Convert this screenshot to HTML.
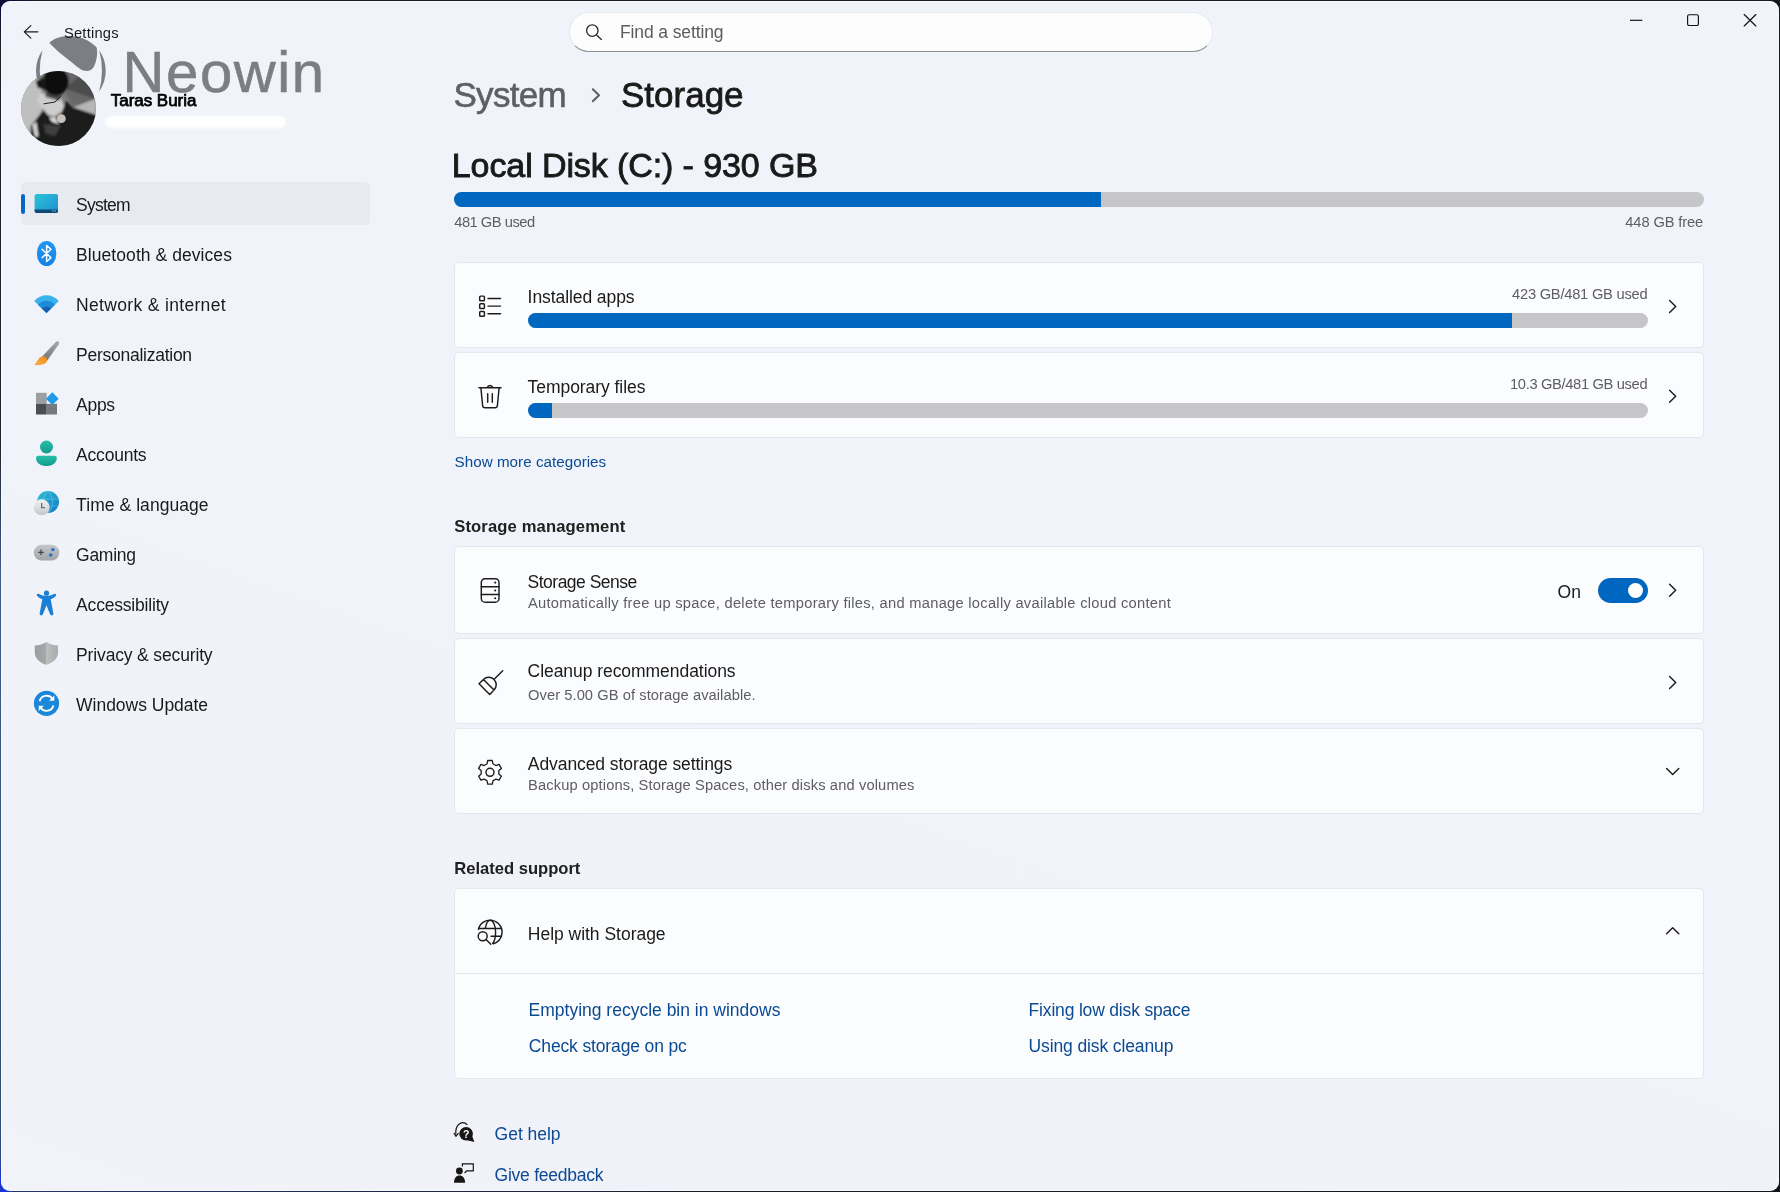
<!DOCTYPE html>
<html lang="en">
<head>
<meta charset="utf-8">
<title>Settings - Storage</title>
<style>
html,body{margin:0;padding:0;}
body{width:1780px;height:1192px;overflow:hidden;position:relative;
  background:radial-gradient(circle at 0 0,#0e0d3a 0,#0e0d3a 14px,rgba(14,13,58,0) 40px),
    radial-gradient(circle at 0 100%,#1a35d0 0,#1a35d0 12px,rgba(26,53,208,0) 36px),
    linear-gradient(180deg,#1c1e26 0%,#1f222c 37%,#3e5a85 48%,#3a5679 70%,#35526f 92%,#2a4690 100%);
  font-family:"Liberation Sans",sans-serif;}
#win{position:absolute;left:0;top:0;width:1780px;height:1192px;overflow:hidden;}
.edge-r{position:absolute;right:0;top:0;width:12px;height:1192px;background:#14161b;}
.edge-b{position:absolute;left:12px;right:0;bottom:0;height:6px;background:linear-gradient(90deg,#23356f 0%,#1b1d2b 40%,#13141a 100%);}
.surface{position:absolute;left:1px;top:1px;width:1778px;height:1190px;border-radius:9px;background:linear-gradient(200deg,#f0f3f9 0%,#f0f3f9 55%,#f2f2f9 100%);
  box-shadow:inset 0 0 0 1px rgba(255,255,255,.55);}
.t{position:absolute;white-space:pre;margin:0;padding:0;font-weight:400;text-decoration:none;display:block;-webkit-font-smoothing:antialiased;}
#txt{position:absolute;left:0;top:0;width:1780px;height:1192px;will-change:transform;}
.card{position:absolute;left:454px;width:1250px;box-sizing:border-box;background:#fbfcfe;border:1px solid #e6e7ec;border-radius:5px;}
.bar{position:absolute;border-radius:8px;background:#c6c6c9;overflow:hidden;}
.bar i{position:absolute;left:0;top:0;bottom:0;background:#0067c0;display:block;}
.navsel{position:absolute;left:21px;top:182px;width:349px;height:43px;border-radius:5px;background:#e8eaf1;}
.navsel b{position:absolute;left:0;top:12px;width:4px;height:20px;border-radius:2px;background:#0868c1;display:block;}
.search{position:absolute;left:568.5px;top:11.5px;width:644px;height:40px;box-sizing:border-box;border-radius:20px;
  background:#fdfdfe;border:1px solid #e8eaef;border-bottom-color:#8d8f93;}
.toggle{position:absolute;left:1598px;top:578px;width:50px;height:25px;border-radius:12.5px;background:#0067c0;}
.toggle i{position:absolute;left:29.5px;top:5px;width:15px;height:15px;border-radius:50%;background:#fff;display:block;}
.redact{position:absolute;left:105px;top:115.5px;width:180.5px;height:12px;border-radius:6px;background:#fff;filter:blur(1.2px);}
.divider{position:absolute;left:455px;top:973px;width:1248px;height:1px;background:#e6e7ec;}
svg.gfx{position:absolute;left:0;top:0;will-change:transform;}

</style>
</head>
<body>
<div id="win">
<div class="edge-r"></div><div class="edge-b"></div>
<div class="surface"></div>
<div class="search"></div>
<div class="navsel"><b></b></div>
<div class="redact"></div>
<div class="bar" style="left:454px;top:192px;width:1249.5px;height:15px"><i style="width:646.8px"></i></div>
<div class="card" style="top:262px;height:86px"></div>
<div class="bar" style="left:528px;top:313px;width:1119.5px;height:15px"><i style="width:984px"></i></div>
<div class="card" style="top:352px;height:86px"></div>
<div class="bar" style="left:528px;top:403px;width:1119.5px;height:15px"><i style="width:23.8px"></i></div>
<div class="card" style="top:546px;height:88px"></div>
<div class="toggle"><i></i></div>
<div class="card" style="top:638px;height:86px"></div>
<div class="card" style="top:728px;height:86px"></div>
<div class="card" style="top:888px;height:191px"></div>
<div class="divider"></div>

<svg class="gfx" width="1780" height="1192" viewBox="0 0 1780 1192">
<defs>
  <linearGradient id="gSys" x1="0" y1="0" x2="1" y2="1"><stop offset="0" stop-color="#2ac3d6"/><stop offset="1" stop-color="#1f8fd2"/></linearGradient>
  <linearGradient id="gBt" x1="0" y1="0" x2="0" y2="1"><stop offset="0" stop-color="#2196f6"/><stop offset="1" stop-color="#1482e6"/></linearGradient>
  <linearGradient id="gAcc" x1="0" y1="0" x2="0" y2="1"><stop offset="0" stop-color="#27bfa6"/><stop offset="1" stop-color="#159a8c"/></linearGradient>
  <linearGradient id="gGlobe" x1="0" y1="0" x2="1" y2="1"><stop offset="0" stop-color="#2cc0d6"/><stop offset="1" stop-color="#1478c8"/></linearGradient>
  <linearGradient id="gClock" x1="0" y1="0" x2="0" y2="1"><stop offset="0" stop-color="#f3f3f4"/><stop offset="1" stop-color="#c4c6ca"/></linearGradient>
  <linearGradient id="gPad" x1="0" y1="0" x2="0" y2="1"><stop offset="0" stop-color="#c3c5c8"/><stop offset="1" stop-color="#a3a5a9"/></linearGradient>
  <linearGradient id="gShield" x1="0" y1="0" x2="1" y2="0"><stop offset="0" stop-color="#9b9d9f"/><stop offset="0.5" stop-color="#a7a9ab"/><stop offset="0.5" stop-color="#bcbec0"/><stop offset="1" stop-color="#a9abad"/></linearGradient>
  <linearGradient id="gBrush" x1="1" y1="0" x2="0" y2="1"><stop offset="0" stop-color="#a9abad"/><stop offset="1" stop-color="#6f7174"/></linearGradient>
  <linearGradient id="gTip" x1="1" y1="0" x2="0" y2="1"><stop offset="0" stop-color="#f08a1c"/><stop offset="1" stop-color="#fbb04a"/></linearGradient>
  <clipPath id="avc"><circle cx="58.5" cy="108.5" r="37.5"/></clipPath>
  <filter id="bl1" x="-20%" y="-20%" width="140%" height="140%"><feGaussianBlur stdDeviation="16"/></filter>
  <filter id="bl2" x="-20%" y="-20%" width="140%" height="140%"><feGaussianBlur stdDeviation="7"/></filter>
</defs>

<!-- Neowin watermark -->
<g fill="#7b7e83">
  <path d="M49.3 42.9 C54 38.5 60 36.300 68 36 C79 35.600 89 39.500 96.500 47.300 C97.500 51 97.300 55 96.500 58.700 C95.800 62 95 64.500 93.800 66.800 C92.300 69.600 90.300 70.900 87.700 70.900 C85.800 70.900 84 70.800 82.300 70.200 C78.500 68 75.500 65.500 72.200 62.800 L58.700 52 Z"/>
  <path d="M99.2 50.3 A35.750 35.750 0 0 1 99.200 91.400 A79.600 79.600 0 0 0 99.200 50.300 Z"/>
  <path d="M42.5 50.3 A35.750 35.750 0 0 0 42.500 91.400 A79.600 79.600 0 0 1 42.500 50.300 Z"/>
  <text x="122.6" y="91.5" font-family="'Liberation Sans',sans-serif" font-size="58" textLength="201.4" lengthAdjust="spacing" stroke="#7b7e83" stroke-width="0.6">Neowin</text>
</g>

<!-- avatar -->
<g clip-path="url(#avc)">
 <g transform="translate(15 65) scale(0.07133)">
  <rect x="0" y="0" width="1262" height="1192" fill="#7c7c7c"/>
  <g filter="url(#bl1)">
    <path d="M60 150 L340 200 L420 560 L300 760 L200 1000 L60 1000 Z" fill="#bfbfbf"/>
    <path d="M700 100 L1200 100 L1200 520 L820 590 L720 420 Z" fill="#676767"/>
    <path d="M700 330 L1130 480 L1130 300 L900 150 Z" fill="#4e4e4e"/>
    <path d="M800 600 L1140 470 L1140 700 Z" fill="#b6b6b6"/>
    <path d="M330 420 L470 380 L640 440 L700 620 L560 720 L470 700 L380 600 L310 500 Z" fill="#cdcdcd"/>
    <path d="M420 370 L650 420 L620 500 L430 450 Z" fill="#4a4a4a"/>
    <ellipse cx="575" cy="232" rx="178" ry="195" fill="#0e0e0e"/>
    <path d="M290 225 L430 170 L430 350 L320 320 Z" fill="#161616"/>
    <path d="M220 850 L400 640 L520 770 L640 700 L720 500 L800 590 L1140 700 L1140 1200 L220 1200 Z" fill="#1b1b1b"/>
    <path d="M400 830 L640 860 L560 1000 L430 960 Z" fill="#3f3f3f"/>
    <path d="M480 740 L560 730 L620 830 L520 800 Z" fill="#d8d8d8"/>
    <path d="M240 830 L300 800 L330 1000 L280 1010 Z" fill="#d2d2d2"/>
  </g>
  <g filter="url(#bl2)">
    <path d="M400 545 L560 520 L650 425" fill="none" stroke="#151515" stroke-width="13"/>
    <circle cx="650" cy="752" r="62" fill="#c8c1ba"/>
  </g>
 </g>
</g>

<!-- back arrow -->
<path d="M30.800 25.6 L24.300 31.85 L30.800 38.1 M24.600 31.85 H37.9" fill="none" stroke="#1f1f1f" stroke-width="1.25" stroke-linecap="round" stroke-linejoin="round"/>

<!-- window controls -->
<g fill="none" stroke="#111" stroke-width="1.15">
  <path d="M1630 20.3 H1642.3"/>
  <rect x="1687.6" y="14.7" width="10.8" height="10.800" rx="1.6"/>
  <path d="M1744.200 14.5 L1755.900 26 M1755.900 14.5 L1744.200 26" stroke-linecap="round"/>
</g>

<!-- search icon -->
<g fill="none" stroke="#2a2a2a" stroke-width="1.35" stroke-linecap="round">
  <circle cx="592.3" cy="30.6" r="5.7"/>
  <path d="M596.500 34.9 L601.4 39.4"/>
</g>

<!-- breadcrumb chevron -->
<path d="M592.800 89.2 L599 95.2 L592.800 101.200" fill="none" stroke="#5d5f62" stroke-width="2" stroke-linecap="round" stroke-linejoin="round"/>

<!-- nav icons -->
<g>
  <!-- System -->
  <rect x="34.6" y="194" width="23.4" height="19" rx="2" fill="url(#gSys)"/>
  <path d="M34.600 209.6 H58 V211 a2 2 0 0 1 -2 2 H36.600 a2 2 0 0 1 -2 -2 Z" fill="#0f4874"/>
  <rect x="52.2" y="210.300" width="1.2" height="1.2" fill="#7fd0ea"/><rect x="54.600" y="210.300" width="1.2" height="1.2" fill="#7fd0ea"/>
  <!-- Bluetooth -->
  <rect x="37" y="241" width="19.2" height="25" rx="9.6" ry="11.5" fill="url(#gBt)"/>
  <path d="M42 249.300 L51 257.700 L46.600 261.500 V245.500 L51 249.300 L42 257.700" fill="none" stroke="#fff" stroke-width="1.5" stroke-linejoin="round" stroke-linecap="round"/>
  <!-- Network -->
  <path d="M34.200 301 C41 293.200 52 293.200 58.800 301 L46.500 313 Z" fill="#39b3ee"/>
  <path d="M38 304.700 C42.800 299.500 50.200 299.500 55 304.700 L46.500 313 Z" fill="#1e8bd8"/>
  <path d="M41.800 308.400 C44.400 305.700 48.600 305.700 51.200 308.400 L46.500 313 Z" fill="#1660b0"/>
  <!-- Personalization -->
  <path d="M56.2 341.600 C58 340.300 60 342 58.800 344.200 L47.300 360.500 L42 356.800 Z" fill="url(#gBrush)"/>
  <path d="M42.300 356.300 C45.500 356 47.800 358.500 46.800 361.500 C45.500 364.500 39 365.800 33.800 364.800 C37.500 363 37.800 357.500 42.300 356.300 Z" fill="url(#gTip)"/>
  <!-- Apps -->
  <rect x="36" y="392.800" width="10.700" height="11" fill="#9c9ea2"/>
  <rect x="36" y="403.800" width="10.700" height="10.700" fill="#4b4d51"/>
  <rect x="46.700" y="403.800" width="10.300" height="10.700" fill="#77797d"/>
  <rect x="36" y="392.800" width="21" height="21.700" rx="1.5" fill="none"/>
  <path d="M52.300 392.300 L58.700 398.700 L52.300 405.100 L45.900 398.700 Z" fill="#1f9be8"/>
  <!-- Accounts -->
  <circle cx="46.500" cy="447" r="6.500" fill="url(#gAcc)"/>
  <path d="M36 458 a2.200 2.200 0 0 1 2.200 -2.200 H54.600 a2.200 2.200 0 0 1 2.200 2.200 C56.800 463.500 51.500 466 46.400 466 C41.300 466 36 463.500 36 458 Z" fill="url(#gAcc)"/>
  <!-- Time & language -->
  <circle cx="48" cy="502" r="11" fill="url(#gGlobe)"/>
  <path d="M48 491 C42 496 42 508 48 513 M48 491 C54 496 54 508 48 513 M37.500 499 H58.500 M38 506 H58" fill="none" stroke="#6fd3e6" stroke-width="0.7" opacity=".7"/>
  <circle cx="41.700" cy="507.300" r="8" fill="url(#gClock)"/>
  <path d="M41.700 503 V507.800 H45" fill="none" stroke="#55575b" stroke-width="1.100"/>
  <!-- Gaming -->
  <rect x="33.800" y="544.800" width="25.500" height="15.700" rx="7.850" fill="url(#gPad)"/>
  <path d="M38.200 552.300 H43.800 M41 549.500 V555.100" stroke="#44464a" stroke-width="1.300" fill="none"/>
  <circle cx="52.900" cy="549.600" r="1.700" fill="#1c6fd6"/><circle cx="50.700" cy="555" r="1.700" fill="#1c6fd6"/>
  <!-- Accessibility -->
  <g fill="#1a7fd6">
    <circle cx="46.500" cy="593.200" r="2.600"/>
    <path d="M37 595.700 C36.300 594.300 37.600 593.200 38.900 593.900 C43.500 596.400 49.500 596.400 54.100 593.900 C55.400 593.200 56.700 594.300 56 595.700 C54.500 597.600 52 598.800 50.700 599.300 L53.300 613.200 C53.700 615.600 50.900 616.400 50 614.100 L46.500 605.200 L43 614.100 C42.100 616.400 39.300 615.600 39.700 613.200 L42.300 599.300 C41 598.800 38.500 597.600 37 595.700 Z"/>
  </g>
  <!-- Privacy -->
  <path d="M46.400 642 C49.500 644.300 53.800 645.400 58 645.400 V652.500 C58 658.500 53 662.800 46.400 664.800 C39.800 662.800 34.800 658.500 34.800 652.500 V645.400 C39 645.400 43.300 644.300 46.400 642 Z" fill="url(#gShield)"/>
  <!-- Windows Update -->
  <circle cx="46.500" cy="703.300" r="12.600" fill="#1b87d9"/>
  <g fill="none" stroke="#fff" stroke-width="1.900" stroke-linecap="butt">
    <path d="M39.600 701.200 A7.200 7.200 0 0 1 52.300 698.600"/>
    <path d="M53.400 705.400 A7.200 7.200 0 0 1 40.700 708"/>
  </g>
  <path d="M54.300 695.600 V700.800 H49.100 Z" fill="#fff"/>
  <path d="M38.700 711 V705.800 H43.900 Z" fill="#fff"/>
</g>

<!-- content icons -->
<g fill="none" stroke="#1c1c1c" stroke-width="1.45" stroke-linecap="round" stroke-linejoin="round">
  <!-- installed apps (list) -->
  <rect x="479.700" y="296.100" width="4.700" height="4.700" rx="0.8"/><path d="M488 298.500 H500.500"/>
  <rect x="479.700" y="303.800" width="4.700" height="4.700" rx="0.8"/><path d="M488 306.100 H500.500"/>
  <rect x="479.700" y="311.500" width="4.700" height="4.700" rx="0.8"/><path d="M488 313.800 H500.500"/>
  <!-- trash -->
  <path d="M479 387.800 H501 M487.300 387.500 A2.800 2.800 0 0 1 492.700 387.500 M480.900 388 L482.600 405.500 A2.500 2.500 0 0 0 485.100 407.800 H494.900 A2.500 2.500 0 0 0 497.400 405.500 L499.100 388 M487.700 393.800 V402.200 M492.300 393.800 V402.200"/>
  <!-- storage sense -->
  <rect x="481.300" y="578.700" width="17.700" height="23.500" rx="3.800"/>
  <path d="M481.300 586.700 H499 M481.300 594.400 H499"/>
  <!-- broom -->
  <g transform="translate(490 683.500) rotate(45)">
    <path d="M0 -18 V-5.500 M-7.500 1.800 A7.500 7.500 0 0 1 7.500 1.800 Z M-7.500 1.800 V8 H7.500 V1.800"/>
  </g>
  <!-- gear -->
  <circle cx="490" cy="772.300" r="4"/>
  <!-- globe w/ search -->
  <path d="M478.400 929.200 A12 12 0 1 1 493.500 943.700"/>
  <path d="M479.200 928.400 H501.200 M491 936.200 H501.400"/>
  <path d="M485.300 928.300 C486.200 923.500 488 920.300 490.100 920.300 C493.200 920.300 495.600 925.500 495.600 932.100 C495.600 937.300 494.500 941.500 492.700 943.300"/>
  <circle cx="482.700" cy="936.200" r="4.500"/>
  <path d="M486 939.500 L490.800 944.300"/>
  <!-- card chevrons -->
  <path d="M1669.600 300.400 L1675.700 306.400 L1669.600 312.400"/>
  <path d="M1669.600 390.200 L1675.700 396.200 L1669.600 402.200"/>
  <path d="M1669.600 584.300 L1675.700 590.300 L1669.600 596.300"/>
  <path d="M1669.600 676.500 L1675.700 682.500 L1669.600 688.500"/>
  <path d="M1666.600 768.400 L1672.700 774.400 L1678.800 768.400"/>
  <path d="M1666.600 933.800 L1672.700 927.800 L1678.800 933.800"/>
</g>
<!-- storage dots -->
<g fill="#1c1c1c"><circle cx="495.200" cy="582.600" r="1.050"/><circle cx="495.200" cy="590.500" r="1.050"/><circle cx="495.200" cy="598.300" r="1.050"/></g>
<!-- gear teeth -->
<path d="M487.07 763.79 L487.71 760.52 L492.29 760.52 L492.93 763.79 L495.90 765.51 L499.06 764.43 L501.35 768.39 L498.83 770.58 L498.83 774.02 L501.35 776.21 L499.06 780.17 L495.90 779.09 L492.93 780.81 L492.29 784.08 L487.71 784.08 L487.07 780.81 L484.10 779.09 L480.94 780.17 L478.65 776.21 L481.17 774.02 L481.17 770.58 L478.65 768.39 L480.94 764.43 L484.10 765.51 Z" fill="none" stroke="#1c1c1c" stroke-width="1.300" stroke-linejoin="round"/>

<!-- get help -->
<g>
  <circle cx="466.100" cy="1133.800" r="6.800" fill="#161616"/>
  <path d="M467.2 1140.300 L474.400 1142 L471.900 1135.500 Z" fill="#161616"/>
  <path d="M467.300 1124.900 C463 1120.300 455 1123 455.800 1134.500" fill="none" stroke="#161616" stroke-width="1.200"/>
  <path d="M453.800 1133 L456 1136.200 L458.600 1133.200" fill="none" stroke="#161616" stroke-width="1.200"/>
  <text x="466.100" y="1137.600" text-anchor="middle" font-family="'Liberation Sans',sans-serif" font-weight="700" font-size="10.500" fill="#fff">?</text>
</g>
<!-- feedback -->
<g fill="#161616">
  <circle cx="459.400" cy="1171" r="3.400"/>
  <path d="M454 1182.800 C454 1178 456.200 1175.400 459.500 1175.400 C462.800 1175.400 465.100 1178 465.100 1182.800 Z"/>
  <path d="M462.400 1166.500 V1163.900 H473.300 V1170.900 H466.600 L464.600 1173" fill="none" stroke="#161616" stroke-width="1.200"/>
</g>
</svg>

<div id="txt">
<header>
<div class="t" style="left:64.00px;top:25px;font-size:14.7px;line-height:16px;color:#1a1a1a;letter-spacing:0.203px;">Settings</div>
<div class="t" style="left:620.00px;top:22px;font-size:17.5px;line-height:20px;color:#5c5c5c;letter-spacing:-0.113px;">Find a setting</div>
</header>
<aside>
<div class="t" style="left:110.80px;top:91px;font-size:17.0px;line-height:19px;color:#000;letter-spacing:-0.038px;-webkit-text-stroke:0.75px #000;">Taras Buria</div>
</aside>
<nav>
<a class="t" href="#" style="left:76.10px;top:195px;font-size:17.5px;line-height:20px;color:#1a1a1a;letter-spacing:-0.772px;">System</a>
<a class="t" href="#" style="left:76.10px;top:245px;font-size:17.5px;line-height:20px;color:#1a1a1a;letter-spacing:0.062px;">Bluetooth &amp; devices</a>
<a class="t" href="#" style="left:76.10px;top:295px;font-size:17.5px;line-height:20px;color:#1a1a1a;letter-spacing:0.326px;">Network &amp; internet</a>
<a class="t" href="#" style="left:76.10px;top:345px;font-size:17.5px;line-height:20px;color:#1a1a1a;letter-spacing:-0.261px;">Personalization</a>
<a class="t" href="#" style="left:76.10px;top:395px;font-size:17.5px;line-height:20px;color:#1a1a1a;letter-spacing:-0.297px;">Apps</a>
<a class="t" href="#" style="left:76.10px;top:445px;font-size:17.5px;line-height:20px;color:#1a1a1a;letter-spacing:-0.212px;">Accounts</a>
<a class="t" href="#" style="left:76.10px;top:495px;font-size:17.5px;line-height:20px;color:#1a1a1a;letter-spacing:0.060px;">Time &amp; language</a>
<a class="t" href="#" style="left:76.10px;top:545px;font-size:17.5px;line-height:20px;color:#1a1a1a;letter-spacing:-0.296px;">Gaming</a>
<a class="t" href="#" style="left:76.10px;top:595px;font-size:17.5px;line-height:20px;color:#1a1a1a;letter-spacing:-0.193px;">Accessibility</a>
<a class="t" href="#" style="left:76.10px;top:645px;font-size:17.5px;line-height:20px;color:#1a1a1a;letter-spacing:-0.151px;">Privacy &amp; security</a>
<a class="t" href="#" style="left:76.10px;top:695px;font-size:17.5px;line-height:20px;color:#1a1a1a;letter-spacing:-0.023px;">Windows Update</a>
</nav>
<main>
<div class="t" style="left:453.40px;top:75px;font-size:35px;line-height:39px;color:#5d5f62;letter-spacing:-0.661px;-webkit-text-stroke:0.6px #5d5f62;">System</div>
<h1 class="t" style="left:621.00px;top:75px;font-size:35px;line-height:39px;color:#1a1a1a;-webkit-text-stroke:0.8px #1a1a1a;">Storage</h1>
<h2 class="t" style="left:451.80px;top:146px;font-size:34px;line-height:38px;color:#1a1a1a;letter-spacing:-0.098px;-webkit-text-stroke:0.9px #1a1a1a;">Local Disk (C:) - 930 GB</h2>
<div class="t" style="left:454.20px;top:214px;font-size:14.7px;line-height:16px;color:#5e5e60;letter-spacing:-0.475px;">481 GB used</div>
<div class="t" style="right:76.82px;top:214px;font-size:14.7px;line-height:16px;color:#5e5e60;letter-spacing:-0.120px;">448 GB free</div>
<div class="t" style="left:527.60px;top:287px;font-size:17.5px;line-height:20px;color:#1a1a1a;letter-spacing:-0.077px;">Installed apps</div>
<div class="t" style="right:132.64px;top:286px;font-size:14.7px;line-height:16px;color:#5e5e60;letter-spacing:-0.237px;">423 GB/481 GB used</div>
<div class="t" style="left:527.60px;top:377px;font-size:17.5px;line-height:20px;color:#1a1a1a;letter-spacing:-0.061px;">Temporary files</div>
<div class="t" style="right:132.74px;top:376px;font-size:14.7px;line-height:16px;color:#5e5e60;letter-spacing:-0.340px;">10.3 GB/481 GB used</div>
<a class="t" href="#" style="left:454.60px;top:453px;font-size:15.2px;line-height:17px;color:#0b4a93;letter-spacing:0.026px;">Show more categories</a>
<h3 class="t" style="left:454.20px;top:517px;font-size:16.6px;line-height:19px;color:#202020;letter-spacing:0.132px;font-weight:700;">Storage management</h3>
<div class="t" style="left:527.60px;top:572px;font-size:17.5px;line-height:20px;color:#1a1a1a;letter-spacing:-0.515px;">Storage Sense</div>
<div class="t" style="left:528.00px;top:595px;font-size:14.7px;line-height:16px;color:#5e5e60;letter-spacing:0.272px;">Automatically free up space, delete temporary files, and manage locally available cloud content</div>
<div class="t" style="left:1557.40px;top:582px;font-size:17.5px;line-height:20px;color:#1a1a1a;letter-spacing:0.241px;">On</div>
<div class="t" style="left:527.60px;top:661px;font-size:17.5px;line-height:20px;color:#1a1a1a;letter-spacing:-0.053px;">Cleanup recommendations</div>
<div class="t" style="left:528.00px;top:687px;font-size:14.7px;line-height:16px;color:#5e5e60;letter-spacing:0.068px;">Over 5.00 GB of storage available.</div>
<div class="t" style="left:527.80px;top:754px;font-size:17.5px;line-height:20px;color:#1a1a1a;letter-spacing:-0.077px;">Advanced storage settings</div>
<div class="t" style="left:528.00px;top:777px;font-size:14.7px;line-height:16px;color:#5e5e60;letter-spacing:0.125px;">Backup options, Storage Spaces, other disks and volumes</div>
<h3 class="t" style="left:454.20px;top:859px;font-size:16.6px;line-height:19px;color:#202020;letter-spacing:-0.008px;font-weight:700;">Related support</h3>
<div class="t" style="left:527.80px;top:924px;font-size:17.5px;line-height:20px;color:#1a1a1a;letter-spacing:-0.021px;">Help with Storage</div>
<a class="t" href="#" style="left:528.60px;top:1000px;font-size:17.5px;line-height:20px;color:#0b4a93;letter-spacing:-0.004px;">Emptying recycle bin in windows</a>
<a class="t" href="#" style="left:528.80px;top:1036px;font-size:17.5px;line-height:20px;color:#0b4a93;letter-spacing:-0.140px;">Check storage on pc</a>
<a class="t" href="#" style="left:1028.60px;top:1000px;font-size:17.5px;line-height:20px;color:#0b4a93;letter-spacing:-0.178px;">Fixing low disk space</a>
<a class="t" href="#" style="left:1028.60px;top:1036px;font-size:17.5px;line-height:20px;color:#0b4a93;letter-spacing:-0.123px;">Using disk cleanup</a>
</main>
<footer>
<a class="t" href="#" style="left:494.60px;top:1124px;font-size:17.5px;line-height:20px;color:#0b4a93;letter-spacing:-0.022px;">Get help</a>
<a class="t" href="#" style="left:494.60px;top:1165px;font-size:17.5px;line-height:20px;color:#0b4a93;letter-spacing:-0.256px;">Give feedback</a>
</footer>
</div>
</div>
</body>
</html>
